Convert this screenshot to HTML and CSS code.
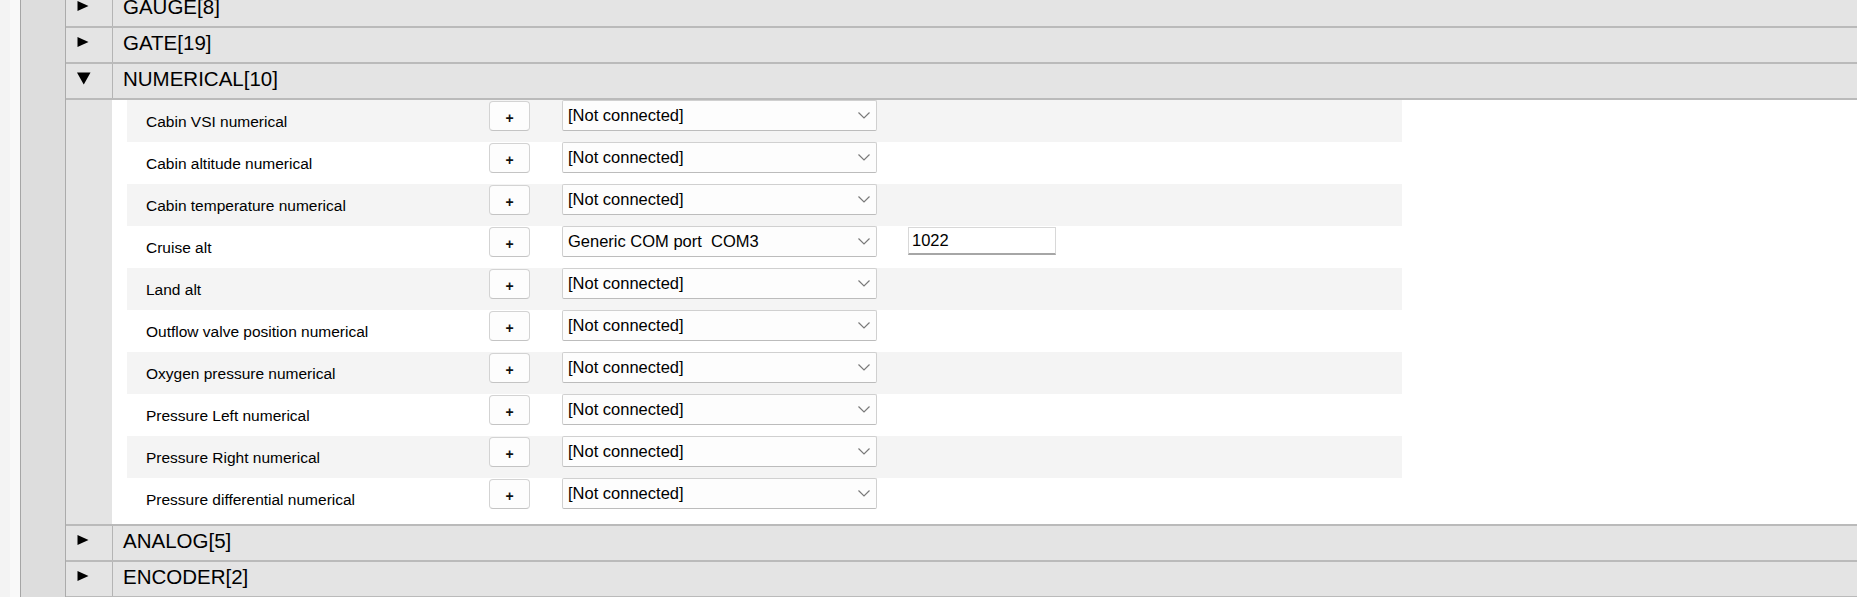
FILE: index.html
```html
<!DOCTYPE html>
<html>
<head>
<meta charset="utf-8">
<link rel="stylesheet" href="styles.css">
</head>
<body>
<div class="app">
  <div class="edge-outer"></div>
  <div class="edge-inner"></div>
  <div class="gutter"></div>
  <div class="tree">
    <div class="node-head">
      <div class="toggle"><svg class="tri" width="14" height="14" viewBox="0 0 14 14"><polygon points="0.5,1 11.5,6 0.5,11" fill="#000"/></svg></div>
      <div class="node-title">GAUGE[8]</div>
    </div>
    <div class="node-head">
      <div class="toggle"><svg class="tri" width="14" height="14" viewBox="0 0 14 14"><polygon points="0.5,1 11.5,6 0.5,11" fill="#000"/></svg></div>
      <div class="node-title">GATE[19]</div>
    </div>
    <div class="node-head">
      <div class="toggle"><svg class="tri" width="14" height="14" viewBox="0 0 14 14"><polygon points="0,0.5 13.5,0.5 6.75,12.5" fill="#000"/></svg></div>
      <div class="node-title">NUMERICAL[10]</div>
    </div>
    <div class="node-body">
      <div class="indent"></div>
      <div class="rows">
        <div class="row">
          <div class="label">Cabin VSI numerical</div>
          <div class="add">+</div>
          <div class="combo"><span class="combo-text">[Not connected]</span><svg class="chev" width="12" height="7" viewBox="0 0 12 7"><polyline points="0.5,0.5 6,6 11.5,0.5" fill="none" stroke="#7a7a7a" stroke-width="1.2"/></svg></div>
        </div>
        <div class="row">
          <div class="label">Cabin altitude numerical</div>
          <div class="add">+</div>
          <div class="combo"><span class="combo-text">[Not connected]</span><svg class="chev" width="12" height="7" viewBox="0 0 12 7"><polyline points="0.5,0.5 6,6 11.5,0.5" fill="none" stroke="#7a7a7a" stroke-width="1.2"/></svg></div>
        </div>
        <div class="row">
          <div class="label">Cabin temperature numerical</div>
          <div class="add">+</div>
          <div class="combo"><span class="combo-text">[Not connected]</span><svg class="chev" width="12" height="7" viewBox="0 0 12 7"><polyline points="0.5,0.5 6,6 11.5,0.5" fill="none" stroke="#7a7a7a" stroke-width="1.2"/></svg></div>
        </div>
        <div class="row">
          <div class="label">Cruise alt</div>
          <div class="add">+</div>
          <div class="combo"><span class="combo-text">Generic COM port&nbsp; COM3</span><svg class="chev" width="12" height="7" viewBox="0 0 12 7"><polyline points="0.5,0.5 6,6 11.5,0.5" fill="none" stroke="#7a7a7a" stroke-width="1.2"/></svg></div>
          <div class="value">1022</div>
        </div>
        <div class="row">
          <div class="label">Land alt</div>
          <div class="add">+</div>
          <div class="combo"><span class="combo-text">[Not connected]</span><svg class="chev" width="12" height="7" viewBox="0 0 12 7"><polyline points="0.5,0.5 6,6 11.5,0.5" fill="none" stroke="#7a7a7a" stroke-width="1.2"/></svg></div>
        </div>
        <div class="row">
          <div class="label">Outflow valve position numerical</div>
          <div class="add">+</div>
          <div class="combo"><span class="combo-text">[Not connected]</span><svg class="chev" width="12" height="7" viewBox="0 0 12 7"><polyline points="0.5,0.5 6,6 11.5,0.5" fill="none" stroke="#7a7a7a" stroke-width="1.2"/></svg></div>
        </div>
        <div class="row">
          <div class="label">Oxygen pressure numerical</div>
          <div class="add">+</div>
          <div class="combo"><span class="combo-text">[Not connected]</span><svg class="chev" width="12" height="7" viewBox="0 0 12 7"><polyline points="0.5,0.5 6,6 11.5,0.5" fill="none" stroke="#7a7a7a" stroke-width="1.2"/></svg></div>
        </div>
        <div class="row">
          <div class="label">Pressure Left numerical</div>
          <div class="add">+</div>
          <div class="combo"><span class="combo-text">[Not connected]</span><svg class="chev" width="12" height="7" viewBox="0 0 12 7"><polyline points="0.5,0.5 6,6 11.5,0.5" fill="none" stroke="#7a7a7a" stroke-width="1.2"/></svg></div>
        </div>
        <div class="row">
          <div class="label">Pressure Right numerical</div>
          <div class="add">+</div>
          <div class="combo"><span class="combo-text">[Not connected]</span><svg class="chev" width="12" height="7" viewBox="0 0 12 7"><polyline points="0.5,0.5 6,6 11.5,0.5" fill="none" stroke="#7a7a7a" stroke-width="1.2"/></svg></div>
        </div>
        <div class="row">
          <div class="label">Pressure differential numerical</div>
          <div class="add">+</div>
          <div class="combo"><span class="combo-text">[Not connected]</span><svg class="chev" width="12" height="7" viewBox="0 0 12 7"><polyline points="0.5,0.5 6,6 11.5,0.5" fill="none" stroke="#7a7a7a" stroke-width="1.2"/></svg></div>
        </div>
      </div>
    </div>
    <div class="node-head">
      <div class="toggle"><svg class="tri" width="14" height="14" viewBox="0 0 14 14"><polygon points="0.5,1 11.5,6 0.5,11" fill="#000"/></svg></div>
      <div class="node-title">ANALOG[5]</div>
    </div>
    <div class="node-head">
      <div class="toggle"><svg class="tri" width="14" height="14" viewBox="0 0 14 14"><polygon points="0.5,1 11.5,6 0.5,11" fill="#000"/></svg></div>
      <div class="node-title">ENCODER[2]</div>
    </div>
  </div>
</div>
</body>
</html>
```

FILE: styles.css
```css
* { box-sizing: border-box; }

html, body {
  margin: 0;
  padding: 0;
}

body {
  background: #ffffff;
  overflow: hidden;
  font-family: "Liberation Sans", Arial, sans-serif;
  color: #000;
}

.app {
  display: flex;
  height: 597px;
  overflow: hidden;
}

.edge-outer {
  width: 10px;
  flex: none;
  background: #f3f3f3;
}

.edge-inner {
  width: 11px;
  flex: none;
  background: #f9f9f9;
  border-right: 1px solid #a5a5a5;
}

.gutter {
  width: 45px;
  flex: none;
  background: #dddddd;
  border-right: 1px solid #ababab;
}

.tree {
  flex: 1;
  margin-top: -8px;
  min-width: 0;
}

.node-head {
  display: flex;
  height: 36px;
  background: #e4e4e4;
  border-bottom: 2px solid #bababa;
}

.toggle {
  width: 47px;
  flex: none;
  border-right: 1px solid #b4b4b4;
  padding-left: 11px;
  padding-top: 8px;
}

.tri {
  display: block;
}

.node-title {
  padding-left: 10px;
  font-size: 20.5px;
  line-height: 30px;
  white-space: nowrap;
}

.node-body {
  display: flex;
  border-bottom: 2px solid #bababa;
}

.indent {
  width: 46px;
  flex: none;
  background: #e4e4e4;
}

.rows {
  padding: 0 0 4px 15px;
}

.row {
  display: flex;
  align-items: flex-start;
  width: 1275px;
  height: 42px;
}

.row:nth-child(odd) {
  background: #f4f4f4;
}

.label {
  width: 362px;
  height: 42px;
  flex: none;
  padding-left: 19px;
  font-size: 15.5px;
  line-height: 44px;
  white-space: nowrap;
}

.add {
  width: 41px;
  height: 30px;
  margin-top: 1px;
  flex: none;
  border: 1px solid #d3d3d3;
  border-bottom-color: #c4c4c4;
  border-radius: 4px;
  background: #fdfdfd;
  display: flex;
  justify-content: center;
  align-items: center;
  padding-top: 3px;
  font-size: 14px;
  font-weight: bold;
  color: #111;
}

.combo {
  margin-left: 32px;
  width: 315px;
  height: 31px;
  flex: none;
  display: flex;
  align-items: center;
  justify-content: space-between;
  border: 1px solid #d0d0d0;
  border-bottom-color: #bcbcbc;
  border-radius: 2px;
  background: #fdfdfd;
  padding-left: 5px;
  padding-right: 6px;
}

.combo-text {
  font-size: 16.5px;
  line-height: 29px;
  white-space: nowrap;
}

.chev {
  display: block;
}

.value {
  margin-left: 31px;
  margin-top: 1px;
  width: 148px;
  height: 28px;
  flex: none;
  border: 1px solid #d8d8d8;
  border-bottom: 2px solid #a6a6a6;
  background: #ffffff;
  padding-left: 3px;
  font-size: 16.5px;
  line-height: 24px;
}
```
